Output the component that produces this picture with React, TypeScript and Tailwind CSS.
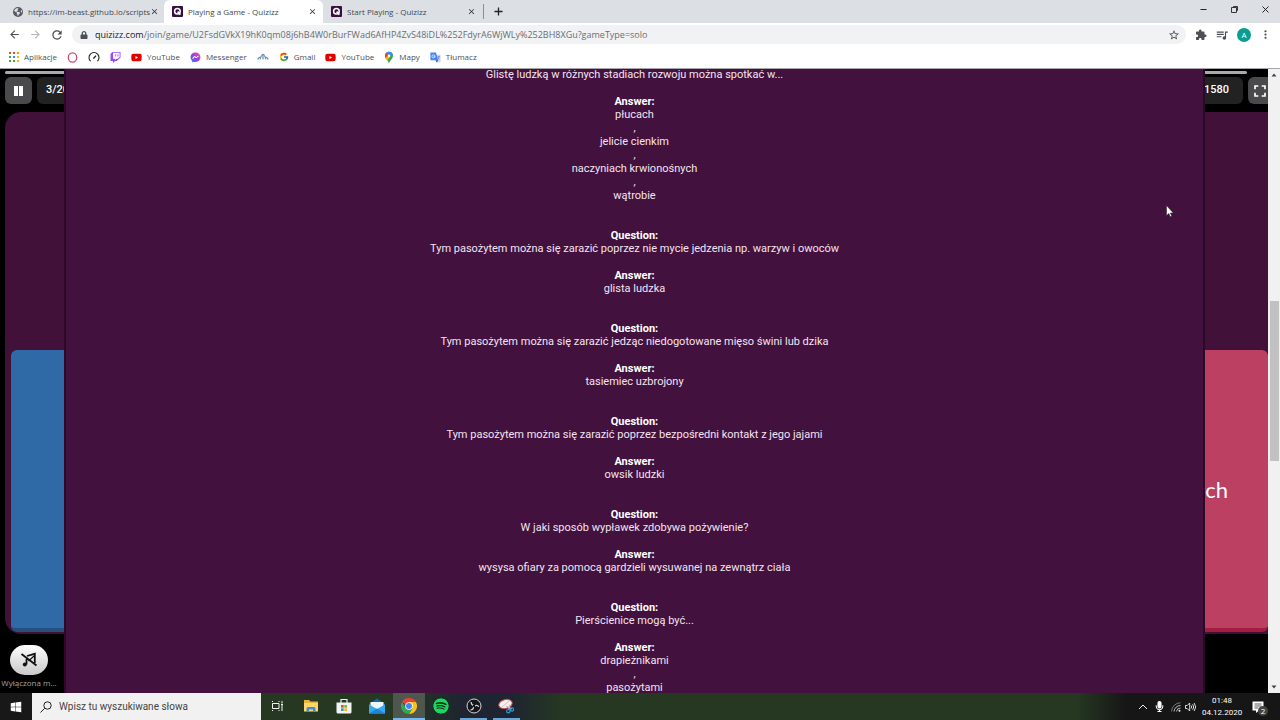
import React from 'react';
import { FaLock, FaMicrophone, FaSpotify, FaTwitch, FaWindows, FaYoutube } from 'react-icons/fa';
import { FaEarthAmericas } from 'react-icons/fa6';
import { FcGoogle } from 'react-icons/fc';
import { MdClose, MdExtension, MdMoreVert, MdQueueMusic, MdRefresh, MdArrowBack, MdArrowForward, MdStarBorder, MdFullscreen } from 'react-icons/md';

type IconProps = { className?: string };

const items = [
  { question: 'Glistę ludzką w różnych stadiach rozwoju można spotkać w...', answers: ['płucach', 'jelicie cienkim', 'naczyniach krwionośnych', 'wątrobie'] },
  { question: 'Tym pasożytem można się zarazić poprzez nie mycie jedzenia np. warzyw i owoców', answers: ['glista ludzka'] },
  { question: 'Tym pasożytem można się zarazić jedząc niedogotowane mięso świni lub dzika', answers: ['tasiemiec uzbrojony'] },
  { question: 'Tym pasożytem można się zarazić poprzez bezpośredni kontakt z jego jajami', answers: ['owsik ludzki'] },
  { question: 'W jaki sposób wypławek zdobywa pożywienie?', answers: ['wysysa ofiary za pomocą gardzieli wysuwanej na zewnątrz ciała'] },
  { question: 'Pierścienice mogą być...', answers: ['drapieżnikami', 'pasożytami'] },
];

const QuizizzIcon = () => (
  <svg viewBox="0 0 11 11" className="size-[11px] shrink-0">
    <rect width="11" height="11" rx="1" fill="#381040" />
    <circle cx="5.4" cy="5.2" r="2.8" fill="none" stroke="#fff" strokeWidth="1.5" />
    <path d="M5.6 5.6 8.4 8.6" stroke="#fff" strokeWidth="1.6" />
  </svg>
);

const AppsIcon = () => (
  <svg viewBox="0 0 10 10" className="size-[10px]">
    {['#ea4335', '#ea4335', '#f29900', '#34a853', '#4285f4', '#fbbc04', '#34a853', '#5f9b3f', '#fbbc04'].map((fill, i) => (
      <rect key={i} x={(i % 3) * 4} y={Math.floor(i / 3) * 4} width="2" height="2" fill={fill} />
    ))}
  </svg>
);

const OperaIcon = () => (
  <svg viewBox="0 0 12 12" className="size-[11px]">
    <ellipse cx="6" cy="6" rx="4.6" ry="5" fill="none" stroke="#d8466b" strokeWidth="1.4" />
  </svg>
);

const GaugeIcon = () => (
  <svg viewBox="0 0 12 12" className="size-3" fill="none" stroke="#222" strokeWidth="1.1">
    <path d="M2.6 10.2A5 5 0 1 1 9.4 10.2" />
    <path d="M5.4 7.6 8 4.6" strokeWidth="1.4" />
  </svg>
);

const MessengerIcon = () => (
  <svg viewBox="0 0 12 12" className="size-[11px]">
    <defs>
      <linearGradient id="msg" x1="0" y1="1" x2="1" y2="0">
        <stop offset="0" stopColor="#1d7bff" />
        <stop offset=".5" stopColor="#9a3bf0" />
        <stop offset="1" stopColor="#ff5f7e" />
      </linearGradient>
    </defs>
    <path d="M6 .6C2.9.6.6 2.8.6 5.8c0 1.6.7 2.9 1.8 3.8v1.8l1.7-.9c.6.2 1.2.3 1.9.3 3.1 0 5.4-2.2 5.4-5.1C11.4 2.8 9.1.6 6 .6Z" fill="url(#msg)" />
    <path d="m2.8 7.2 2.2-2.4 1.6 1.4 2.5-1.5" fill="none" stroke="#fff" strokeWidth="1.2" />
  </svg>
);

const PondIcon = () => (
  <svg viewBox="0 0 12 8" className="h-2 w-3" fill="none" stroke="#5f93b5" strokeWidth="1.2">
    <path d="M.8 6.5Q1.5 4 4 4M11.2 6.5Q10.5 4 8 4M3.2 6.5Q4 2 6 2t2.8 4.5M6 3v3.5" />
    <path d="M4.8 1.5h2.5" stroke="#7b8790" />
  </svg>
);

const MapsIcon = () => (
  <svg viewBox="0 0 10 13" className="h-[13px] w-[10px]">
    <path d="M5 .8a4 4 0 0 1 4 4C9 7.9 6 9 5 12.5 4 9 1 7.9 1 4.8a4 4 0 0 1 4-4Z" fill="#34a853" />
    <path d="M5 .8a4 4 0 0 1 3.8 2.7L5.2 5.2 2 2.2A4 4 0 0 1 5 .8Z" fill="#4285f4" />
    <path d="M2 2.2 4.8 4.8 1.9 7.4A4 4 0 0 1 2 2.2Z" fill="#ea4335" />
    <path d="M1.6 6.8 4.8 4.3l1.5 1.3-3.1 3.8Z" fill="#fbbc04" />
    <circle cx="5" cy="4.7" r="1.3" fill="#fff" />
  </svg>
);

const TranslateIcon = () => (
  <svg viewBox="0 0 12 12" className="size-[11px]">
    <path d="M5 3h6.5v8.5h-4Z" fill="#d5d9df" />
    <path d="M.5.5h6L9 9H.5Z" fill="#4285f4" />
    <path d="M6 9h3l-1.5 2.5Z" fill="#2a56c6" />
    <circle cx="3.8" cy="4.8" r="1.7" fill="none" stroke="#fff" strokeWidth=".8" />
    <path d="M3.8 4.8h1.7" stroke="#fff" strokeWidth=".8" />
    <path d="M8.3 5H11M9.7 4v1q0 2-1.2 3M8.8 6l1.8 2.2" fill="none" stroke="#5b7fc7" strokeWidth=".7" />
  </svg>
);

const MutedMusicIcon = () => (
  <svg viewBox="0 0 18 16" className="h-4 w-[18px]" fill="none" stroke="#111" strokeWidth="1.8">
    <path d="M1.5 2 16.5 13.5M6.5 12.5V7M7 4l7.8-2.2V11" />
    <circle cx="4.8" cy="12.5" r="2" fill="#111" stroke="none" />
    <path d="M8.5 9 14 4" strokeWidth="1.2" />
  </svg>
);

const TaskViewIcon = () => (
  <svg viewBox="0 0 12 12" className="size-3" fill="none" stroke="#f2f2f2">
    <path d="M.5 3.5H7v5H.5ZM.5 1v1M7 1v1M.5 10v1M7 10v1M10 1v2.5M10 6v5" />
    <path d="M9 4.7h2" strokeWidth="1.6" />
  </svg>
);

const FolderIcon = () => (
  <svg viewBox="0 0 16 14" className="h-[14px] w-4">
    <path d="M1 1h5l1.5 1.5H15V12H1Z" fill="#e8b73a" />
    <path d="M1 4h14v8.5H1Z" fill="#ffd768" />
    <path d="M3.5 13V9.5A1.5 1.5 0 0 1 5 8h6a1.5 1.5 0 0 1 1.5 1.5V13H10v-2.5H6V13Z" fill="#3d8fd6" />
  </svg>
);

const StoreIcon = () => (
  <svg viewBox="0 0 16 16" className="size-4">
    <path d="M5 5V1.5h6V5" fill="none" stroke="#f2f2f2" strokeWidth="1.2" />
    <path d="M.5 4.5h15V14q0 1.5-1.5 1.5H2Q.5 15.5.5 14Z" fill="#f2f2f2" />
    <path d="M5 7h2.7v2.7H5Z" fill="#e8502a" />
    <path d="M8.3 7H11v2.7H8.3Z" fill="#7db72f" />
    <path d="M5 10.3h2.7V13H5Z" fill="#2a9fe0" />
    <path d="M8.3 10.3H11V13H8.3Z" fill="#f5b81f" />
  </svg>
);

const MailIcon = () => (
  <svg viewBox="0 0 18 16" className="h-4 w-[18px]">
    <path d="M1 6 9 .5 17 6v9H1Z" fill="#1468b3" />
    <path d="M2.5 4h13v5L9 12 2.5 9Z" fill="#eef6fc" />
    <path d="M1 6.5 9 11l8-4.5v9H1Z" fill="#35a9ee" />
    <path d="m1 15.5 8-5 8 5Z" fill="#1b86d6" />
  </svg>
);

const ChromeIcon = () => (
  <svg viewBox="0 0 16 16" className="size-4">
    <path d="M8 8 1.07 4a8 8 0 0 1 13.86 0Z" fill="#ea4335" />
    <path d="M8 8V4h6.93A8 8 0 0 1 8 16l3.5-6Z" fill="#fbc116" />
    <path d="m8 8 3.5 2L8 16A8 8 0 0 1 1.07 4L4.5 10Z" fill="#34a853" />
    <circle cx="8" cy="8" r="3.8" fill="#fff" />
    <circle cx="8" cy="8" r="3" fill="#4285f4" />
  </svg>
);

const ObsIcon = () => (
  <svg viewBox="0 0 16 16" className="size-4" fill="none" stroke="#d5d5d5">
    <circle cx="8" cy="8" r="7" fill="#15161a" />
    <path d="M8 7.5Q5 7 5.2 4M8.5 8.3q2.500-2 4.300.5M7.500 8.500q.2 3.300-3 3.500" strokeWidth="1.2" />
    <circle cx="8" cy="8" r="1.2" fill="#15161a" stroke="none" />
  </svg>
);

const SnipIcon = () => (
  <svg viewBox="0 0 17 16" className="h-4 w-[17px]">
    <ellipse cx="7.5" cy="6" rx="6.8" ry="4.5" fill="#f5f0f0" stroke="#c94a50" transform="rotate(-15 7.5 6)" />
    <path d="m4 9 7-6" stroke="#c8c8c8" />
    <path d="m8 8 6 3M12 6.5 10.5 12" stroke="#b8c3ca" strokeWidth="1.2" />
    <circle cx="14" cy="11.5" r="1.6" fill="none" stroke="#2d9bd8" strokeWidth="1.2" />
    <circle cx="10.3" cy="13.2" r="1.7" fill="none" stroke="#2d9bd8" strokeWidth="1.2" />
  </svg>
);

const SearchIcon = () => (
  <svg viewBox="0 0 12 12" className="size-3 shrink-0" fill="none" stroke="#222">
    <circle cx="7.5" cy="4.5" r="3.7" />
    <path d="M4.8 7.2.5 11.5" />
  </svg>
);

const WifiIcon = ({ className }: IconProps) => (
  <svg viewBox="0 0 10 10" className={className} fill="none" stroke="#bbb">
    <path d="M.5 9.5a9 9 0 0 1 9-8.700" stroke="#777" />
    <path d="M3 9.5a6.5 6.5 0 0 1 6.5-6M5.5 9.5a4 4 0 0 1 4-3.5" />
    <circle cx="8.5" cy="8.8" r="1" fill="#eee" stroke="none" />
  </svg>
);

const VolumeIcon = ({ className }: IconProps) => (
  <svg viewBox="0 0 11 10" className={className} fill="none" stroke="#eee" strokeWidth=".9">
    <path d="M.5 3.5h1.700L4.700 1v8L2.200 6.500H.5ZM6.200 3.500q1 1.500 0 3M7.700 2.200q2 2.800 0 5.600M9.200 1q3 4 0 8" />
  </svg>
);

const Tab = ({ title, icon, active = false }: { title: string; icon: React.ReactNode; active?: boolean }) => (
  <div className={active ? 'flex w-[159px] items-center rounded-t-md bg-white pr-1.5 pl-2' : 'flex w-[159px] items-center pr-1.5 pl-2'}>
    {icon}
    <span className="flex-1 pl-[5px] text-[8px] whitespace-nowrap text-[#45484c]">{title}</span>
    <button aria-label="Close tab" className="text-[#333]"><MdClose className="size-[9px]" /></button>
  </div>
);

const bookmarks = [
  { label: 'Aplikacje', icon: <AppsIcon /> },
  { label: '', icon: <OperaIcon /> },
  { label: '', icon: <GaugeIcon /> },
  { label: '', icon: <FaTwitch className="size-[11px] text-[#9146ff]" /> },
  { label: 'YouTube', icon: <FaYoutube className="size-[11px] text-[#e00000]" /> },
  { label: 'Messenger', icon: <MessengerIcon /> },
  { label: '', icon: <PondIcon /> },
  { label: 'Gmail', icon: <FcGoogle className="size-[10px]" /> },
  { label: 'YouTube', icon: <FaYoutube className="size-[11px] text-[#e00000]" /> },
  { label: 'Mapy', icon: <MapsIcon /> },
  { label: 'Tłumacz', icon: <TranslateIcon /> },
];

const Browser = () => (
  <header className="shrink-0 border-b border-[#aaa5ad] bg-white">
    <div className="flex h-[23px] bg-[#dce0e5]">
      <div className="flex pl-[5px]">
        <Tab title="https://im-beast.github.io/scripts" icon={<FaEarthAmericas className="size-[10px] shrink-0 text-[#555b60]" />} />
        <Tab title="Playing a Game - Quizizz" icon={<QuizizzIcon />} active />
        <Tab title="Start Playing - Quizizz" icon={<QuizizzIcon />} />
      </div>
      <button aria-label="New tab" className="my-1 ml-px flex items-center border-l border-[#8a8d91] pl-2.5">
        <svg viewBox="0 0 9 9" className="size-[9px]" stroke="#222" strokeWidth="1.3"><path d="M4.5.5v8M.5 4.5h8" /></svg>
      </button>
      <div className="ml-auto flex items-center gap-[22px] pr-2.5 pb-1">
        <button aria-label="Minimize"><svg viewBox="0 0 9 9" className="size-[9px]" stroke="#222"><path d="M1.5 4.5h6" /></svg></button>
        <button aria-label="Restore"><svg viewBox="0 0 9 9" className="size-[9px]" fill="none" stroke="#222"><path d="M1.5 2.5h5v5h-5ZM3.5 2.5v-1h4v4h-1" strokeWidth=".9" /></svg></button>
        <button aria-label="Close"><svg viewBox="0 0 9 9" className="size-[9px]" stroke="#222"><path d="m1.5 1.5 6 6M7.5 1.5l-6 6" /></svg></button>
      </div>
    </div>
    <div className="flex h-[23px] items-center text-[#4c5054]">
      <div className="flex w-[72px] items-center gap-2 pl-2">
        <button aria-label="Back"><MdArrowBack className="size-[13px]" /></button>
        <button aria-label="Forward" className="text-[#b4b7ba]"><MdArrowForward className="size-[13px]" /></button>
        <button aria-label="Reload"><MdRefresh className="size-[14px]" /></button>
      </div>
      <div className="flex h-[19px] flex-1 items-center rounded-full bg-[#f0f2f4] pr-1.5 pl-2">
        <FaLock className="size-2 shrink-0" />
        <p className="flex-1 overflow-hidden pl-[7px] text-[9px] whitespace-nowrap text-[#6a6e73]">
          <span className="text-[#202124]">quizizz.com</span>/join/game/U2FsdGVkX19hK0qm08j6hB4W0rBurFWad6AfHP4ZvS48iDL%252FdyrA6WjWLy%252BH8XGu?gameType=solo
        </p>
        <button aria-label="Bookmark this page"><MdStarBorder className="size-3" /></button>
      </div>
      <div className="flex items-center gap-2 pr-2 pl-[9px]">
        <button aria-label="Extensions"><MdExtension className="size-3" /></button>
        <button aria-label="Media"><MdQueueMusic className="size-[14px]" /></button>
        <button className="size-[14px] rounded-full bg-[#0c9d92] text-center text-[8px] leading-[14px] text-white">A</button>
        <button aria-label="Menu"><MdMoreVert className="size-[13px]" /></button>
      </div>
    </div>
    <nav className="flex h-[22px] items-center gap-[10px] pl-[9px] text-[8px] text-[#4c5054]">
      {bookmarks.map(({ label, icon }, i) => (
        <a key={i} href="#" className="flex items-center gap-[5px]">
          {icon}
          {label && <span>{label}</span>}
        </a>
      ))}
    </nav>
  </header>
);

const Game = () => (
  <section className="-mr-1 flex h-full flex-col bg-black pt-0.5 pl-[5px] text-white">
    <div className="mr-[25px] h-[3px] rounded-full bg-[#aaa]" />
    <div className="mt-[3px] flex h-[27px] gap-[5px] font-[Roboto] text-[11px] font-medium">
      <button aria-label="Pause" className="flex w-[27px] items-center justify-center gap-px rounded-md bg-[#4a494b]">
        <span className="h-[10px] w-1 bg-white" />
        <span className="h-[10px] w-1 bg-white" />
      </button>
      <div className="flex w-12 items-center rounded-md bg-[#222] pl-[9px]">3/20</div>
      <div className="ml-auto flex w-20 items-center justify-end rounded-md bg-[#222] pr-3.5">1580</div>
      <button aria-label="Fullscreen" className="flex w-6 items-center justify-center rounded-l-md bg-[#4a494b]">
        <MdFullscreen className="size-[20px] shrink-0" />
      </button>
    </div>
    <div className="mt-2 flex flex-1 flex-col justify-end rounded-l-2xl bg-[#411139] pb-0.5 pl-1.5">
      <div className="flex h-[282px] justify-between pr-1">
        <button aria-label="First answer" className="w-1/4 rounded-md border-b-4 border-[#25507b] bg-[#2f6aa6]" />
        <button className="w-1/4 rounded-md border-b-4 border-[#a51c43] bg-[#bb4062] pr-10 text-right font-[Lato] text-[22px]">ch</button>
      </div>
    </div>
    <div className="mt-[11px] flex h-12 w-12 flex-col items-center">
      <button aria-label="Music" className="flex h-[30px] w-[38px] items-center justify-center rounded-2xl bg-linear-to-b from-white to-[#c9c9c9]">
        <MutedMusicIcon />
      </button>
      <span className="text-[8px] leading-[15px] whitespace-nowrap text-[#a5a5a5]">Wyłączona m...</span>
    </div>
  </section>
);

const Answers = () => (
  <article className="absolute inset-y-0 right-[63px] left-16 overflow-hidden border-x-2 border-[#2a0a28] bg-[#42113d] text-center font-[Roboto] text-[11px] leading-[13px] text-[#f3e4f1]">
    <div className="-mt-px">
      {items.map(({ question, answers }, i) => (
        <section key={i} className="mb-[27px]">
          {i > 0 && <h2 className="font-bold text-white">Question:</h2>}
          <p>{question}</p>
          <h2 className="mt-[14px] font-bold text-white">Answer:</h2>
          {answers.map((answer, j) => (
            <React.Fragment key={answer}>
              {j > 0 && <p className="h-[14px]">,</p>}
              <p>{answer}</p>
            </React.Fragment>
          ))}
        </section>
      ))}
    </div>
  </article>
);

const Scrollbar = () => (
  <div className="flex w-3 shrink-0 flex-col items-center justify-between bg-[#f1f1f1] py-1">
    <svg viewBox="0 0 6 4" className="h-1 w-1.5" fill="#444"><path d="m.5 3.5 2.5-3 2.5 3Z" /></svg>
    <div className="h-40 w-[9px] bg-[#c1c1c1]" />
    <svg viewBox="0 0 6 4" className="h-1 w-1.5" fill="#444"><path d="M.5.5 3 3.5 5.5.5Z" /></svg>
  </div>
);

const apps = [
  { name: 'Task view', icon: <TaskViewIcon />, style: 'w-[33px] border-transparent' },
  { name: 'File Explorer', icon: <FolderIcon />, style: 'w-[33px] border-transparent' },
  { name: 'Microsoft Store', icon: <StoreIcon />, style: 'w-[33px] border-transparent' },
  { name: 'Mail', icon: <MailIcon />, style: 'w-[33px] border-transparent' },
  { name: 'Chrome', icon: <ChromeIcon />, style: 'w-8 border-[#76b9ed] bg-[#4d574d]' },
  { name: 'Spotify', icon: <FaSpotify className="size-4 rounded-full bg-[#102818] text-[#1ed760]" />, style: 'w-8 border-transparent' },
  { name: 'OBS', icon: <ObsIcon />, style: 'mx-[3px] w-[27px] border-[#6aa6d6]' },
  { name: 'Snipping Tool', icon: <SnipIcon />, style: 'mx-[3px] w-[27px] border-[#6aa6d6]' },
];

const Taskbar = () => (
  <footer className="flex h-[27px] shrink-0 bg-[linear-gradient(90deg,#263822_31%,#1e2530_36%,#1e2530_40%,#263822_44%,#263822_84%,#161616_88%)] text-white">
    <button aria-label="Start" className="flex w-8 items-center justify-center bg-[#181818]"><FaWindows className="size-3" /></button>
    <label className="flex w-[229px] items-center gap-[7px] bg-[#f1f1f1] pl-2">
      <SearchIcon />
      <input aria-label="Search" placeholder="Wpisz tu wyszukiwane słowa" className="w-full font-[Roboto] text-[10px] outline-none placeholder:text-[#444]" />
    </label>
    <div className="flex">
      {apps.map(({ name, icon, style }) => (
        <button key={name} aria-label={name} className={`flex items-center justify-center border-b-2 ${style}`}>{icon}</button>
      ))}
    </div>
    <div className="ml-auto flex items-center pr-[15px]">
      <svg viewBox="0 0 10 6" className="mr-1.5 h-1.5 w-[10px]" fill="none" stroke="#eee"><path d="m1 5 4-4 4 4" /></svg>
      <FaMicrophone className="mr-1.5 size-[11px]" />
      <WifiIcon className="mr-1 size-[10px]" />
      <VolumeIcon className="mr-1.5 h-[10px] w-[11px]" />
      <time className="w-10 text-center font-[Roboto] text-[8px] leading-[12px] whitespace-nowrap">01:48<br />04.12.2020</time>
      <button aria-label="Notifications" className="relative ml-2.5 flex">
        <svg viewBox="0 0 13 12" className="h-3 w-[13px]"><path d="M.5.5h11v9H7L4 12V9.5H.5Z" fill="#fff" /><path d="M2.5 3h7M2.5 5h7M2.5 7h4" stroke="#333" strokeWidth=".8" /></svg>
        <span className="absolute top-[5px] left-[6px] size-[10px] rounded-full bg-[#444] text-[8px] leading-[10px]">2</span>
      </button>
    </div>
  </footer>
);

export default function App() {
  return (
    <div className="relative flex h-screen flex-col overflow-hidden font-['Open_Sans',sans-serif]">
      <Browser />
      <main className="flex min-h-0 flex-1">
        <div className="relative flex-1 overflow-hidden">
          <Game />
          <Answers />
        </div>
        <Scrollbar />
      </main>
      <Taskbar />
      <svg viewBox="0 0 8 12" className="absolute top-[205px] left-[1166px] h-3 w-2"><path d="M.5.5v10l2.300-2 1.500 3.200 1.400-.7L4.300 8h3Z" fill="#fff" stroke="#222" strokeWidth=".5" /></svg>
    </div>
  );
}
